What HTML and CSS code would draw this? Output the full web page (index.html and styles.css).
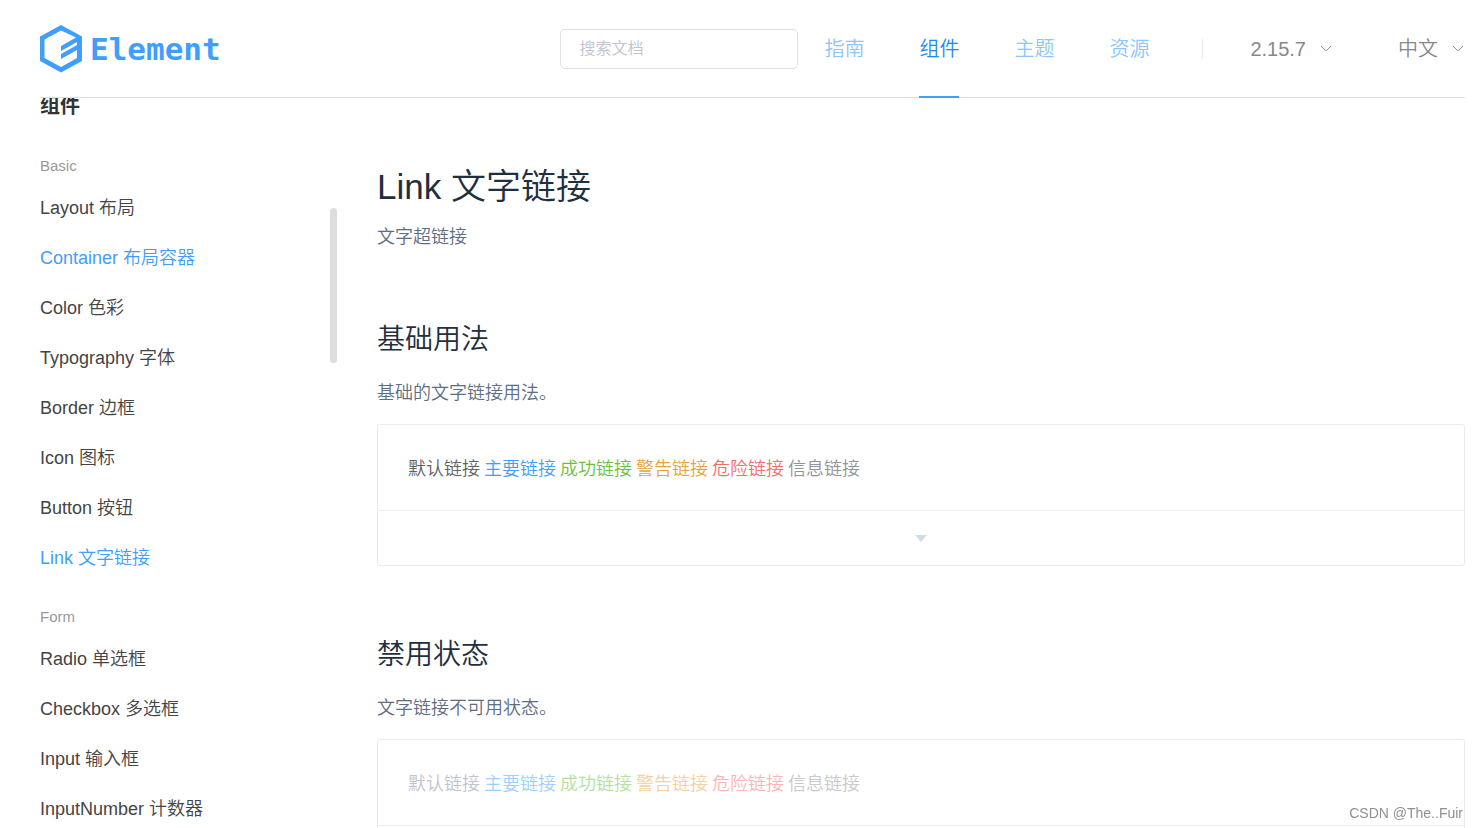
FILE: index.html
```
<!DOCTYPE html>
<html lang="zh-CN">
<head>
    <meta charset="UTF-8">
    <meta name="viewport" content="width=device-width, initial-scale=1.0">
    <title>Element</title>

    <link rel="stylesheet" href="styles.css">
</head>
<body>
    <header class="header">
        <a class="logo" href="#">
            <svg width="42" height="48" viewBox="0 0 42 48" aria-hidden="true">
                <path fill="#409eff" fill-rule="evenodd" d="M21 0 42 11.500V36L21 47.500 0 36V11.500ZM21 5.500 4.500 14.500V33L21 42 37 33V25L21 34V29L37 20V17L21 26V21L36 12.500Z"/>
            </svg>
            <span class="logo-text">Element</span>
        </a>
        <input class="search" type="text" placeholder="搜索文档" aria-label="搜索文档">
        <nav class="nav">
            <a class="nav-link" href="#">指南</a>
            <a class="nav-link active" href="#">组件</a>
            <a class="nav-link" href="#">主题</a>
            <a class="nav-link" href="#">资源</a>
        </nav>
        <span class="divider"></span>
        <button class="dropdown" type="button">2.15.7
            <svg width="12" height="8" viewBox="0 0 12 8"><path d="M1 1l5 5 5-5"/></svg>
        </button>
        <button class="dropdown" type="button">中文
            <svg width="12" height="8" viewBox="0 0 12 8"><path d="M1 1l5 5 5-5"/></svg>
        </button>
    </header>

    <div class="container">
        <aside class="sidebar">
            <h4 class="side-title">组件</h4>
            <div class="group">
                <div class="group-title">Basic</div>
                <a href="#">Layout 布局</a>
                <a class="active" href="#">Container 布局容器</a>
                <a href="#">Color 色彩</a>
                <a href="#">Typography 字体</a>
                <a href="#">Border 边框</a>
                <a href="#">Icon 图标</a>
                <a href="#">Button 按钮</a>
                <a class="active" href="#">Link 文字链接</a>
            </div>
            <div class="group">
                <div class="group-title">Form</div>
                <a href="#">Radio 单选框</a>
                <a href="#">Checkbox 多选框</a>
                <a href="#">Input 输入框</a>
                <a href="#">InputNumber 计数器</a>
            </div>
            <div class="scrollbar"></div>
        </aside>

        <main class="content">
            <h1>Link 文字链接</h1>
            <p>文字超链接</p>

            <h2>基础用法</h2>
            <p>基础的文字链接用法。</p>
            <div class="demo">
                <div class="source">
                    <a class="link" href="#">默认链接</a>
                    <a class="link primary" href="#">主要链接</a>
                    <a class="link success" href="#">成功链接</a>
                    <a class="link warning" href="#">警告链接</a>
                    <a class="link danger" href="#">危险链接</a>
                    <a class="link info" href="#">信息链接</a>
                </div>
                <button class="control" type="button" aria-label="显示代码"><span class="caret"></span></button>
            </div>

            <h2>禁用状态</h2>
            <p>文字链接不可用状态。</p>
            <div class="demo">
                <div class="source disabled">
                    <a class="link">默认链接</a>
                    <a class="link primary">主要链接</a>
                    <a class="link success">成功链接</a>
                    <a class="link warning">警告链接</a>
                    <a class="link danger">危险链接</a>
                    <a class="link info">信息链接</a>
                </div>
                <button class="control" type="button" aria-label="显示代码"><span class="caret"></span></button>
            </div>
        </main>
    </div>

    <div class="watermark">CSDN @The..Fuir</div>
</body>
</html>
```
FILE: styles.css
```
* {
    box-sizing: border-box;
}

body {
    margin: 0;
    height: 100vh;
    overflow: hidden;
    padding: 0 12px 0 40px;
    background: #fff;
    font-family: "Liberation Sans", "Noto Sans CJK SC", sans-serif;
    font-size: 18px;
    font-weight: 350;
}

a {
    text-decoration: none;
}

button {
    border: 0;
    padding: 0;
    background: none;
    font: inherit;
    cursor: pointer;
}

/* Header */
.header {
    position: relative;
    z-index: 1;
    display: flex;
    align-items: center;
    height: 98px;
    padding-right: 1px;
    border-bottom: 1px solid #dcdfe6;
    background: #fff;
    font-size: 20px;
}

.logo {
    display: flex;
    align-items: center;
    gap: 8px;
    margin-right: auto;
    color: #409eff;
}

.logo-text {
    font-family: "DejaVu Sans Mono", monospace;
    font-size: 31px;
    font-weight: bold;
    line-height: 48px;
}

.search {
    width: 238px;
    height: 40px;
    padding: 0 18px;
    border: 1px solid #dcdfe6;
    border-radius: 5px;
    font: inherit;
    font-size: 16px;
}

.search::placeholder {
    color: #c0c4cc;
}

.nav {
    display: flex;
    align-self: stretch;
    gap: 55px;
    margin: 0 53px 0 26px;
}

.nav-link {
    height: 98px;
    line-height: 98px;
    color: #8cc5ff;
}

.nav-link.active {
    border-bottom: 2px solid #409eff;
    color: #1989fa;
}

.divider {
    width: 1px;
    height: 20px;
    margin-right: 47px;
    background: #ebebeb;
}

.dropdown {
    display: flex;
    align-items: center;
    gap: 14px;
    line-height: 30px;
    color: #888;
}

.dropdown + .dropdown {
    margin-left: 66px;
}

.dropdown path {
    fill: none;
    stroke: #999;
}

/* Layout */
.container {
    display: grid;
    grid-template-columns: 297px 1fr;
    gap: 40px;
}

/* Sidebar */
.sidebar {
    position: relative;
    margin-top: -2px;
}

.side-title {
    margin: 0 0 33px;
    font-size: 20px;
    line-height: 20px;
    color: #333;
}

.group {
    margin-bottom: 17px;
}

.group-title {
    font-size: 15px;
    line-height: 34px;
    color: #999;
}

.group a {
    display: block;
    line-height: 50px;
    color: #444;
}

.group a.active {
    color: #409eff;
}

.scrollbar {
    position: absolute;
    top: 112px;
    right: 0;
    width: 7px;
    height: 155px;
    border-radius: 4px;
    background: #dcdddf;
}

/* Content */
.content {
    padding-top: 68px;
}

.content h1,
.content h2 {
    margin: 0;
    font-weight: 350;
    color: #1f2f3d;
}

.content h1 {
    margin-bottom: 15px;
    font-size: 35px;
    line-height: 42px;
}

.content h2 {
    margin: 72px 0 22px;
    font-size: 28px;
    line-height: 34px;
}

.content p {
    margin: 0;
    line-height: 28px;
    color: #5e6d82;
}

.demo {
    margin-top: 17px;
    border: 1px solid #ebebeb;
    border-radius: 3px;
}

.source {
    display: flex;
    gap: 4px;
    padding: 30px 30px 26px;
    line-height: 29px;
}

.link {
    color: #606266;
}

.primary {
    color: #409eff;
}

.success {
    color: #67c23a;
}

.warning {
    color: #e6a23c;
}

.danger {
    color: #f56c6c;
}

.info {
    color: #909399;
}

.disabled .link {
    color: #c0c4cc;
}

.disabled .primary {
    color: #a0cfff;
}

.disabled .success {
    color: #b3e19d;
}

.disabled .warning {
    color: #f3d19e;
}

.disabled .danger {
    color: #fab6b6;
}

.disabled .info {
    color: #c8c9cc;
}

.control {
    display: flex;
    align-items: center;
    justify-content: center;
    width: 100%;
    height: 55px;
    border-top: 1px solid #eaeefb;
}

.caret {
    border: 6px solid transparent;
    border-top: 7px solid #d3dce6;
    border-bottom: 0;
}

.watermark {
    position: fixed;
    right: 14px;
    bottom: 5px;
    font-size: 14px;
    line-height: 20px;
    color: #909090;
}
```
